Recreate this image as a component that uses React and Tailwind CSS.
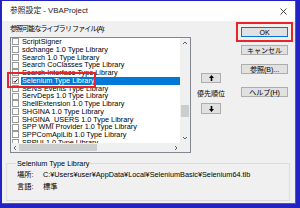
import React from 'react';

const libs = [
  'ScriptSigner',
  'sdchange 1.0 Type Library',
  'Search 1.0 Type Library',
  'Search CoClasses Type Library',
  'Search Interface Type Library',
  'Selenium Type Library',
  'SENS Events Type Library',
  'ServDeps 1.0 Type Library',
  'ShellExtension 1.0 Type Library',
  'SHGINA 1.0 Type Library',
  'SHGINA_USERS 1.0 Type Library',
  'SPP WMI Provider 1.0 Type Library',
  'SPPComApiLib 1.0 Type Library',
  'SPPUI 1.0 Type Library',
];

const font = { fontFamily: '"Liberation Sans", "Noto Sans CJK JP", sans-serif' };

const Chevron = ({ dir }) => {
  const d = {
    up: 'M1 4 L3 2 L5 4',
    down: 'M1 2 L3 4 L5 2',
    left: 'M4 1 L2 3 L4 5',
    right: 'M2 1 L4 3 L2 5',
  }[dir];
  return (
    <svg width="6" height="6" viewBox="0 0 6 6">
      <path d={d} fill="none" stroke="#606060" strokeWidth="1" />
    </svg>
  );
};

const Arrow = ({ down }) => (
  <svg width="5" height="6" viewBox="0 0 5 6" className={down ? 'rotate-180' : ''}>
    <path d="M2.5 0 L5 3 L3.3 3 L3.3 6 L1.7 6 L1.7 3 L0 3 Z" fill="#000" />
  </svg>
);

const Button = ({ children, focused }) => (
  <div
    className={`h-[10px] w-full flex items-center justify-center bg-[#e1e1e1] border text-[7px] leading-none ${
      focused ? 'border-[#0078d7]' : 'border-[#adadad]'
    }`}
  >
    {children}
  </div>
);

export default function App() {
  return (
    <div className="relative w-[300px] h-[208px] bg-[#2323c4] pl-[2px] pt-[1px] overflow-hidden text-black" style={font}>
      <div className="w-[294px] h-[203px] bg-[#f0f0f0] border-r border-b border-[#5a5a8a] flex flex-col">
        {/* title bar */}
        <div className="h-[20px] bg-white flex items-center justify-between pl-[8px] pr-[8px] shrink-0">
          <span className="text-[7.8px] leading-none text-[#222]">参照設定 - VBAProject</span>
          <svg width="7" height="7" viewBox="0 0 7 7">
            <path d="M0.5 0.5 L6.5 6.5 M6.5 0.5 L0.5 6.5" stroke="#333" strokeWidth="0.9" />
          </svg>
        </div>

        {/* main area */}
        <div className="flex pl-[8px] shrink-0">
          <div className="w-[181px]">
            <div className="mt-[3px] h-[9px] leading-[9px] text-[7px] tracking-[-0.9px] whitespace-nowrap">
              参照可能なライブラリ ファイル(A):
            </div>
            <div className="mt-[4px] h-[116px] border border-[#828790] bg-white flex flex-col">
              <div className="flex h-[105px]">
                <div className="w-[169px] overflow-hidden">
                  {libs.map((name, i) => {
                    const sel = name === 'Selenium Type Library';
                    return (
                      <div key={i} className="h-[7.75px] flex items-center">
                        <div className="ml-[1px] w-[7px] h-[7px] shrink-0 border border-[#9a9a9a] bg-white flex items-center justify-center">
                          {sel && (
                            <svg width="6" height="6" viewBox="0 0 6 6">
                              <path d="M0.8 3 L2.3 4.6 L5.3 1" fill="none" stroke="#000" strokeWidth="1.1" />
                            </svg>
                          )}
                        </div>
                        <span
                          className={`ml-[2px] pl-[1px] flex-1 h-full text-[7.3px] leading-[7.75px] whitespace-nowrap ${
                            sel ? 'bg-[#0078d7] text-white' : ''
                          }`}
                        >
                          {name}
                        </span>
                      </div>
                    );
                  })}
                </div>
                {/* vertical scrollbar */}
                <div className="w-[10px] bg-[#f0f0f0] flex flex-col">
                  <div className="h-[10px] flex items-center justify-center">
                    <Chevron dir="up" />
                  </div>
                  <div className="flex-1">
                    <div className="mt-[57px] mx-[1px] h-[12px] bg-[#cdcdcd]" />
                  </div>
                  <div className="h-[10px] flex items-center justify-center">
                    <Chevron dir="down" />
                  </div>
                </div>
              </div>
              {/* horizontal scrollbar */}
              <div className="flex flex-1">
                <div className="w-[169px] bg-[#f0f0f0] flex items-center">
                  <div className="w-[8px] h-full flex items-center justify-center">
                    <Chevron dir="left" />
                  </div>
                  <div className="w-[78px] h-[7px] bg-[#cdcdcd]" />
                  <div className="flex-1" />
                  <div className="w-[9px] h-full flex items-center justify-center">
                    <Chevron dir="right" />
                  </div>
                </div>
                <div className="w-[10px] bg-[#f0f0f0]" />
              </div>
            </div>
          </div>

          {/* priority */}
          <div className="ml-[5px] w-[30px] flex flex-col items-center">
            <div className="mt-[52px] w-[20px] h-[10px] bg-[#e1e1e1] border border-[#adadad] flex items-center justify-center">
              <Arrow />
            </div>
            <div className="mt-[6px] h-[9px] leading-[9px] text-[7px] whitespace-nowrap">優先順位</div>
            <div className="mt-[5px] w-[20px] h-[11px] bg-[#e1e1e1] border border-[#adadad] flex items-center justify-center">
              <Arrow down />
            </div>
          </div>

          {/* buttons */}
          <div className="ml-[15px] w-[47px] flex flex-col">
            <div className="mt-[6px]">
              <Button focused>OK</Button>
            </div>
            <div className="mt-[8px]">
              <Button>キャンセル</Button>
            </div>
            <div className="mt-[9px]">
              <Button>参照(B)...</Button>
            </div>
            <div className="mt-[13px]">
              <Button>ヘルプ(H)</Button>
            </div>
          </div>
        </div>

        {/* info group */}
        <fieldset className="ml-[4px] mt-[6px] w-[284px] h-[42px] shrink-0 border border-[#dcdcdc]">
          <legend className="ml-[9px] px-[1px] text-[7.3px] leading-[9px]">Selenium Type Library</legend>
          <div className="mt-[3px] flex h-[9px] items-center text-[7.3px] whitespace-nowrap pl-[10px]">
            <span className="w-[26px]">場所:</span>
            <span>C:¥Users¥user¥AppData¥Local¥SeleniumBasic¥Selenium64.tlb</span>
          </div>
          <div className="mt-[3px] flex h-[9px] items-center text-[7.3px] whitespace-nowrap pl-[10px]">
            <span className="w-[26px]">言語:</span>
            <span>標準</span>
          </div>
        </fieldset>
      </div>

      {/* annotation boxes */}
      <div className="absolute left-[7px] top-[72px] w-[89px] h-[16px] border-2 border-[#e8262a]" />
      <div className="absolute left-[236px] top-[22px] w-[57px] h-[20px] border-2 border-[#e8262a]" />
    </div>
  );
}
